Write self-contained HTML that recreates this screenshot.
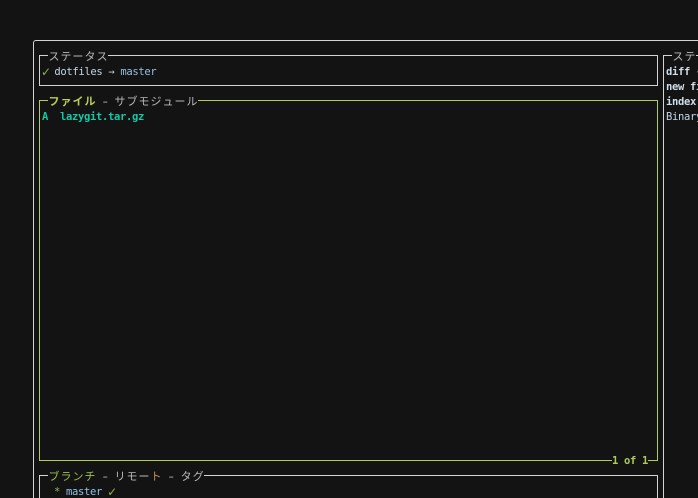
<!DOCTYPE html>
<html><head><meta charset="utf-8">
<style>
html,body{margin:0;padding:0;background:#131313;width:698px;height:498px;overflow:hidden}
body{position:relative;font-family:"DejaVu Sans Mono","Liberation Mono","Noto Sans CJK JP",monospace;font-size:10.5px;letter-spacing:-.32px;color:#c9d6e0}
.b{position:absolute;box-sizing:border-box;border:1px solid #d4d4d4}
.g{border-color:#b0cc5c}
.o{border-right:none;border-bottom:none}
.t{position:absolute;white-space:pre;line-height:15px;height:15px;overflow:visible}
.j{background:#131313;color:#b8b8b8;height:12px;line-height:12px;top:0}
.c{display:inline-block;width:12px;text-align:center;font-size:11px;letter-spacing:0;font-family:"Noto Sans CJK JP","DejaVu Sans Mono",monospace}
.d{display:inline-block;transform:scaleX(1.5)}
.bd{font-weight:bold}
.k{display:inline-block;width:7.32px;margin-left:-1px;font:12px/12px "DejaVu Sans",sans-serif;letter-spacing:0;color:#8fae50;vertical-align:-1px}
</style></head><body>
<div class="b o" style="left:33px;top:40px;width:665px;height:458px;border-top-left-radius:3px"></div>
<div class="b" style="left:39px;top:55px;width:619px;height:31px"></div>
<div class="b g" style="left:39px;top:100px;width:619px;height:361px"></div>
<div class="b" style="left:39px;top:475px;width:619px;height:23px;border-bottom:none"></div>
<div class="b o" style="left:663px;top:55px;width:35px;height:443px"></div>

<div class="t j" style="left:48px;top:50px"><span class="c">ス</span><span class="c">テ</span><span class="c">ー</span><span class="c">タ</span><span class="c">ス</span></div>
<div class="t" style="left:42px;top:65px"><span class="k">✓</span> <span style="color:#c3d6e6">dotfiles</span> <span style="color:#c8c8c8">→</span> <span style="color:#94bfe6">master</span></div>

<div class="t j" style="left:48px;top:95px"><span class="bd" style="color:#b9cb58"><span class="c">フ</span><span class="c">ァ</span><span class="c">イ</span><span class="c">ル</span></span> <span class="d">-</span> <span class="c">サ</span><span class="c">ブ</span><span class="c">モ</span><span class="c">ジ</span><span class="c">ュ</span><span class="c">ー</span><span class="c">ル</span></div>
<div class="t bd" style="left:42px;top:110px;color:#14c8a8">A  lazygit.tar.gz</div>
<div class="t j bd" style="left:612px;top:455px;color:#aeca5a">1 of 1</div>

<div class="t j" style="left:48px;top:470px"><span style="color:#9dbd55"><span class="c">ブ</span><span class="c">ラ</span><span class="c">ン</span><span class="c">チ</span></span> <span class="d">-</span> <span class="c">リ</span><span class="c">モ</span><span class="c">ー</span><span class="c" style="color:#c9925c">ト</span> <span class="d">-</span> <span class="c">タ</span><span class="c">グ</span></div>
<div class="t" style="left:54px;top:485px"><span style="color:#97b854">*</span> <span style="color:#94bfe6">master</span> <span class="k">✓</span></div>

<div class="t j" style="left:672px;top:50px"><span class="c">ス</span><span class="c">テ</span></div>
<div class="t bd" style="left:666px;top:65px;color:#cfdde8">diff -</div>
<div class="t bd" style="left:666px;top:80px;color:#cfdde8">new fi</div>
<div class="t bd" style="left:666px;top:95px;color:#cfdde8">index</div>
<div class="t" style="left:666px;top:110px;color:#c3d6e6">Binary</div>
</body></html>
